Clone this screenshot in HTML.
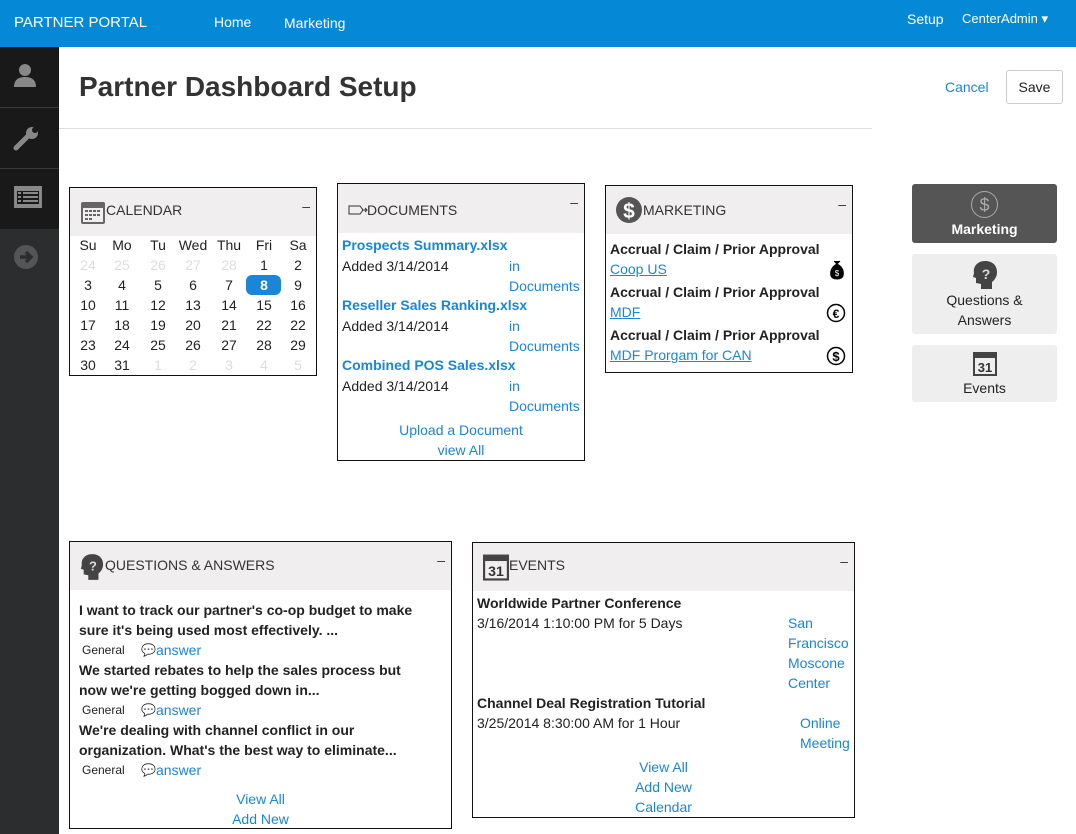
<!DOCTYPE html>
<html><head><meta charset="utf-8"><style>
*{margin:0;padding:0;box-sizing:border-box}
body{width:1076px;height:834px;position:relative;overflow:hidden;background:#fff;font-family:"Liberation Sans",sans-serif;font-size:14px;color:#222}
.a{position:absolute;white-space:nowrap;line-height:20px}
.nav{position:absolute;left:0;top:0;width:1076px;height:47px;background:#0589d6;color:#fff}
.side{position:absolute;left:0;top:47px;width:59px;height:787px;background:#191919}
.sep{position:absolute;left:0;width:59px;height:1px;background:#3a3a3a}
.w{position:absolute;border:1px solid #111;background:#fff}
.wh{position:absolute;left:0;top:0;right:0;height:48px;background:#f0eeef}
.wt{position:absolute;top:14px;font-size:14px;color:#333;line-height:20px}
.mn{position:absolute;right:6px;top:10px;font-size:14px;color:#333}
.b{font-weight:bold}
.l{color:#1a86d6}
.u{text-decoration:underline}
.g{color:#ddd}
.c{text-align:center;width:30px;margin-left:-15px}
.tile{position:absolute;left:912px;width:145px;border-radius:3px;background:#eee;text-align:center;color:#222;font-size:14px}
</style></head><body>
<div class="nav">
<div class="a" style="left:14px;top:13px;font-size:15px">PARTNER PORTAL</div>
<div class="a" style="left:214px;top:12px">Home</div>
<div class="a" style="left:284px;top:13px">Marketing</div>
<div class="a" style="left:907px;top:9px">Setup</div>
<div class="a" style="left:962px;top:9px;font-size:13px">CenterAdmin ▾</div>
</div>
<div class="side">
<div class="sep" style="top:60px"></div>
<div class="sep" style="top:121px"></div>
<div style="position:absolute;left:0;top:182px;width:59px;height:605px;background:#2b2d2f"></div>
<svg style="position:absolute;left:13px;top:16px" width="24" height="26" viewBox="0 0 24 26"><circle cx="12" cy="7" r="6" fill="#888"/><path d="M1 24 Q1 14 12 14 Q23 14 23 24 Z" fill="#888"/></svg>
<svg style="position:absolute;left:13px;top:78px" width="28" height="28" viewBox="0 0 28 28"><path d="M3 23 L15 11" stroke="#888" stroke-width="5" stroke-linecap="round"/><circle cx="19" cy="8" r="6" fill="#888"/><circle cx="22" cy="5" r="3" fill="#191919"/></svg>
<svg style="position:absolute;left:14px;top:139px" width="28" height="22" viewBox="0 0 28 22"><rect x="0" y="0" width="28" height="22" fill="#888"/><rect x="3" y="5" width="22" height="13" fill="#191919"/><g fill="#888"><rect x="4" y="6" width="3" height="2"/><rect x="9" y="6" width="15" height="2"/><rect x="4" y="10" width="3" height="2"/><rect x="9" y="10" width="15" height="2"/><rect x="4" y="14" width="3" height="2"/><rect x="9" y="14" width="15" height="2"/></g></svg>
<svg style="position:absolute;left:14px;top:198px" width="24" height="24" viewBox="0 0 24 24"><circle cx="12" cy="12" r="12" fill="#555"/><path d="M6 12 H16 M12 7 L17 12 L12 17" stroke="#2b2d2f" stroke-width="3.5" fill="none"/></svg>
</div>
<div class="a b" style="left:79px;top:71px;font-size:28px;line-height:32px;color:#333">Partner Dashboard Setup</div>
<div style="position:absolute;left:59px;top:128px;width:813px;height:1px;background:#ddd"></div>
<div class="a l" style="left:945px;top:77px">Cancel</div>
<div style="position:absolute;left:1006px;top:70px;width:57px;height:34px;border:1px solid #ccc;border-radius:3px;text-align:center;line-height:32px">Save</div>

<div class="tile" style="top:184px;height:59px;background:#555;color:#fff"><svg style="position:absolute;left:58px;top:6px" width="29" height="29" viewBox="0 0 29 29"><circle cx="14.5" cy="14.5" r="13" fill="none" stroke="#aaa"/><text x="14.5" y="21" text-anchor="middle" font-size="18" fill="#aaa" font-family="Liberation Sans">$</text></svg><div class="a b" style="left:0;width:145px;top:35px">Marketing</div></div>
<div class="tile" style="top:254px;height:80px"><svg style="position:absolute;left:60px;top:6px" width="26" height="30" viewBox="0 0 26 30"><path d="M13 1 C5 1 1 7 2 13 L1 17 L4 18 L4 23 L9 24 L9 29 L20 29 L20 22 C24 19 25 15 25 12 C25 5 20 1 13 1Z" fill="#444"/><text x="14" y="19" text-anchor="middle" font-size="14" font-weight="bold" fill="#ddd" font-family="Liberation Sans">?</text></svg><div class="a" style="left:0;width:145px;top:36px">Questions &amp;</div><div class="a" style="left:0;width:145px;top:56px">Answers</div></div>
<div class="tile" style="top:345px;height:57px"><svg style="position:absolute;left:61px;top:6px" width="24" height="25" viewBox="0 0 24 25"><rect x="1" y="2" width="22" height="22" fill="none" stroke="#444" stroke-width="2"/><rect x="1" y="2" width="22" height="5" fill="#444"/><text x="12" y="21" text-anchor="middle" font-size="13" font-weight="bold" fill="#333" font-family="Liberation Sans">31</text></svg><div class="a" style="left:0;width:145px;top:33px">Events</div></div>

<!-- Calendar -->
<div class="w" style="left:69px;top:187px;width:248px;height:189px">
<div class="wh"></div>
<svg style="position:absolute;left:10px;top:11px" width="26" height="26" viewBox="0 0 26 26"><rect x="1" y="3" width="24" height="22" rx="2" fill="#666"/><rect x="3" y="9" width="20" height="14" fill="#f0eeef"/><g fill="#666"><rect x="5" y="11" width="3" height="2"/><rect x="9" y="11" width="3" height="2"/><rect x="13" y="11" width="3" height="2"/><rect x="17" y="11" width="3" height="2"/><rect x="5" y="15" width="3" height="2"/><rect x="9" y="15" width="3" height="2"/><rect x="13" y="15" width="3" height="2"/><rect x="17" y="15" width="3" height="2"/><rect x="5" y="19" width="3" height="2"/><rect x="9" y="19" width="3" height="2"/></g></svg>
<div class="wt" style="left:36px;top:12px">CALENDAR</div><div class="mn">–</div>
</div>

<!-- Documents -->
<div class="w" style="left:337px;top:183px;width:248px;height:278px">
<div class="wh" style="height:49px"></div>
<svg style="position:absolute;left:10px;top:20px" width="20" height="12" viewBox="0 0 20 12"><path d="M1 2 H12 L15 6 L12 10 H1 Z M14 6 H19 M17 4 L19 6 L17 8" fill="none" stroke="#333"/></svg>
<div class="wt" style="left:29px;top:16px">DOCUMENTS</div><div class="mn">–</div>
</div>
<div class="a b l" style="left:342px;top:235px">Prospects Summary.xlsx</div>
<div class="a" style="left:342px;top:256px">Added 3/14/2014</div><div class="a l" style="left:509px;top:256px">in</div><div class="a l" style="left:509px;top:276px">Documents</div>
<div class="a b l" style="left:342px;top:295px">Reseller Sales Ranking.xlsx</div>
<div class="a" style="left:342px;top:316px">Added 3/14/2014</div><div class="a l" style="left:509px;top:316px">in</div><div class="a l" style="left:509px;top:336px">Documents</div>
<div class="a b l" style="left:342px;top:355px">Combined POS Sales.xlsx</div>
<div class="a" style="left:342px;top:376px">Added 3/14/2014</div><div class="a l" style="left:509px;top:376px">in</div><div class="a l" style="left:509px;top:396px">Documents</div>
<div class="a l" style="left:337px;width:248px;text-align:center;top:420px">Upload a Document</div>
<div class="a l" style="left:337px;width:248px;text-align:center;top:440px">view All</div>

<!-- Marketing -->
<div class="w" style="left:605px;top:185px;width:248px;height:188px">
<div class="wh"></div>
<svg style="position:absolute;left:9px;top:10px" width="28" height="28" viewBox="0 0 28 28"><circle cx="14" cy="14" r="13" fill="#555"/><text x="14" y="22" text-anchor="middle" font-size="21" font-weight="bold" fill="#fff" font-family="Liberation Sans">$</text></svg>
<div class="wt" style="left:37px;top:14px">MARKETING</div><div class="mn">–</div>
</div>
<div class="a b" style="left:610px;top:239px">Accrual / Claim / Prior Approval</div>
<div class="a l u" style="left:610px;top:259px">Coop US</div>
<svg style="position:absolute;left:830px;top:260px" width="14" height="20" viewBox="0 0 14 20"><path d="M4 1 L7 4 L10 1 M7 4 C1 7 0 12 1 16 Q2 19 7 19 Q12 19 13 16 C14 12 13 7 7 4Z" fill="#000" stroke="#000"/><text x="7" y="16" text-anchor="middle" font-size="8" fill="#fff" font-family="Liberation Sans">$</text></svg>
<div class="a b" style="left:610px;top:282px">Accrual / Claim / Prior Approval</div>
<div class="a l u" style="left:610px;top:302px">MDF</div>
<svg style="position:absolute;left:826px;top:303px" width="20" height="20" viewBox="0 0 20 20"><circle cx="10" cy="10" r="8.5" fill="none" stroke="#000" stroke-width="1.5"/><text x="10" y="15" text-anchor="middle" font-size="12" font-weight="bold" font-family="Liberation Sans">€</text></svg>
<div class="a b" style="left:610px;top:325px">Accrual / Claim / Prior Approval</div>
<div class="a l u" style="left:610px;top:345px">MDF Prorgam for CAN</div>
<svg style="position:absolute;left:826px;top:346px" width="20" height="20" viewBox="0 0 20 20"><circle cx="10" cy="10" r="8.5" fill="none" stroke="#000" stroke-width="1.5"/><text x="10" y="15" text-anchor="middle" font-size="13" font-weight="bold" font-family="Liberation Sans">$</text></svg>

<!-- Q&A -->
<div class="w" style="left:69px;top:541px;width:383px;height:288px">
<div class="wh"></div>
<svg style="position:absolute;left:10px;top:10px" width="24" height="30" viewBox="0 0 26 30"><path d="M13 1 C5 1 1 7 2 13 L1 17 L4 18 L4 23 L9 24 L9 29 L20 29 L20 22 C24 19 25 15 25 12 C25 5 20 1 13 1Z" fill="#444"/><text x="14" y="19" text-anchor="middle" font-size="14" font-weight="bold" fill="#ddd" font-family="Liberation Sans">?</text></svg>
<div class="wt" style="left:35px;top:13px">QUESTIONS &amp; ANSWERS</div><div class="mn">–</div>
</div>
<div class="a b" style="left:79px;top:600px">I want to track our partner's co-op budget to make</div>
<div class="a b" style="left:79px;top:620px">sure it's being used most effectively. ...</div>
<div class="a" style="left:82px;top:640px;font-size:12px">General</div><div class="a" style="left:141px;top:640px;color:#bbb;font-size:12px">💬</div><div class="a l" style="left:156px;top:640px">answer</div>
<div class="a b" style="left:79px;top:660px">We started rebates to help the sales process but</div>
<div class="a b" style="left:79px;top:680px">now we're getting bogged down in...</div>
<div class="a" style="left:82px;top:700px;font-size:12px">General</div><div class="a" style="left:141px;top:700px;color:#bbb;font-size:12px">💬</div><div class="a l" style="left:156px;top:700px">answer</div>
<div class="a b" style="left:79px;top:720px">We're dealing with channel conflict in our</div>
<div class="a b" style="left:79px;top:740px">organization. What's the best way to eliminate...</div>
<div class="a" style="left:82px;top:760px;font-size:12px">General</div><div class="a" style="left:141px;top:760px;color:#bbb;font-size:12px">💬</div><div class="a l" style="left:156px;top:760px">answer</div>
<div class="a l" style="left:69px;width:383px;text-align:center;top:789px">View All</div>
<div class="a l" style="left:69px;width:383px;text-align:center;top:809px">Add New</div>

<!-- Events -->
<div class="w" style="left:472px;top:542px;width:383px;height:276px">
<div class="wh"></div>
<svg style="position:absolute;left:10px;top:10px" width="26" height="28" viewBox="0 0 24 25"><rect x="1" y="2" width="22" height="22" fill="none" stroke="#444" stroke-width="2"/><rect x="1" y="2" width="22" height="5" fill="#444"/><text x="12" y="21" text-anchor="middle" font-size="13" font-weight="bold" fill="#333" font-family="Liberation Sans">31</text></svg>
<div class="wt" style="left:36px;top:12px">EVENTS</div><div class="mn">–</div>
</div>
<div class="a b" style="left:477px;top:593px">Worldwide Partner Conference</div>
<div class="a" style="left:477px;top:613px">3/16/2014 1:10:00 PM for 5 Days</div>
<div class="a l" style="left:788px;top:613px">San</div><div class="a l" style="left:788px;top:633px">Francisco</div><div class="a l" style="left:788px;top:653px">Moscone</div><div class="a l" style="left:788px;top:673px">Center</div>
<div class="a b" style="left:477px;top:693px">Channel Deal Registration Tutorial</div>
<div class="a" style="left:477px;top:713px">3/25/2014 8:30:00 AM for 1 Hour</div>
<div class="a l" style="left:800px;top:713px">Online</div><div class="a l" style="left:800px;top:733px">Meeting</div>
<div class="a l" style="left:472px;width:383px;text-align:center;top:757px">View All</div>
<div class="a l" style="left:472px;width:383px;text-align:center;top:777px">Add New</div>
<div class="a l" style="left:472px;width:383px;text-align:center;top:797px">Calendar</div>

<!-- calendar grid -->
<div class="a c" style="left:88px;top:235px">Su</div><div class="a c" style="left:122px;top:235px">Mo</div><div class="a c" style="left:158px;top:235px">Tu</div><div class="a c" style="left:193px;top:235px">Wed</div><div class="a c" style="left:229px;top:235px">Thu</div><div class="a c" style="left:264px;top:235px">Fri</div><div class="a c" style="left:298px;top:235px">Sa</div>
<div class="a c g" style="left:88px;top:255px">24</div><div class="a c g" style="left:122px;top:255px">25</div><div class="a c g" style="left:158px;top:255px">26</div><div class="a c g" style="left:193px;top:255px">27</div><div class="a c g" style="left:229px;top:255px">28</div><div class="a c" style="left:264px;top:255px">1</div><div class="a c" style="left:298px;top:255px">2</div>
<div style="position:absolute;left:246px;top:275px;width:35px;height:20px;border-radius:6px;background:#1a86d6"></div>
<div class="a c" style="left:88px;top:275px">3</div><div class="a c" style="left:122px;top:275px">4</div><div class="a c" style="left:158px;top:275px">5</div><div class="a c" style="left:193px;top:275px">6</div><div class="a c" style="left:229px;top:275px">7</div><div class="a c b" style="left:264px;top:275px;color:#fff">8</div><div class="a c" style="left:298px;top:275px">9</div>
<div class="a c" style="left:88px;top:295px">10</div><div class="a c" style="left:122px;top:295px">11</div><div class="a c" style="left:158px;top:295px">12</div><div class="a c" style="left:193px;top:295px">13</div><div class="a c" style="left:229px;top:295px">14</div><div class="a c" style="left:264px;top:295px">15</div><div class="a c" style="left:298px;top:295px">16</div>
<div class="a c" style="left:88px;top:315px">17</div><div class="a c" style="left:122px;top:315px">18</div><div class="a c" style="left:158px;top:315px">19</div><div class="a c" style="left:193px;top:315px">20</div><div class="a c" style="left:229px;top:315px">21</div><div class="a c" style="left:264px;top:315px">22</div><div class="a c" style="left:298px;top:315px">22</div>
<div class="a c" style="left:88px;top:335px">23</div><div class="a c" style="left:122px;top:335px">24</div><div class="a c" style="left:158px;top:335px">25</div><div class="a c" style="left:193px;top:335px">26</div><div class="a c" style="left:229px;top:335px">27</div><div class="a c" style="left:264px;top:335px">28</div><div class="a c" style="left:298px;top:335px">29</div>
<div class="a c" style="left:88px;top:355px">30</div><div class="a c" style="left:122px;top:355px">31</div><div class="a c g" style="left:158px;top:355px">1</div><div class="a c g" style="left:193px;top:355px">2</div><div class="a c g" style="left:229px;top:355px">3</div><div class="a c g" style="left:264px;top:355px">4</div><div class="a c g" style="left:298px;top:355px">5</div>
</body></html>
